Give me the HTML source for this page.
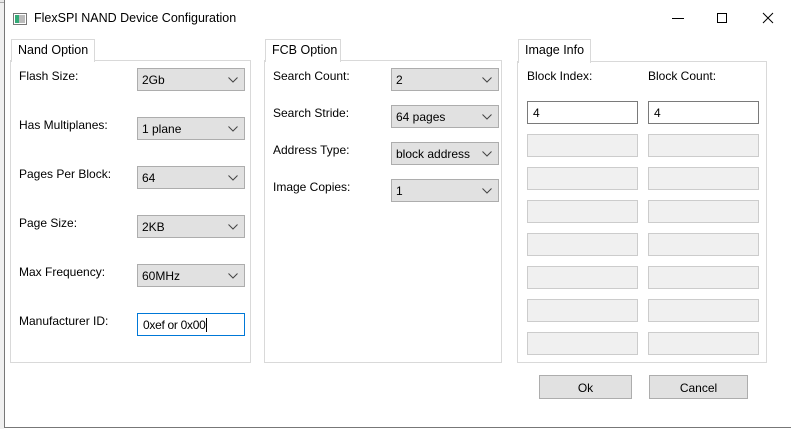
<!DOCTYPE html>
<html><head><meta charset="utf-8"><style>
*{box-sizing:border-box;margin:0;padding:0}
body{width:791px;height:429px;position:relative;overflow:hidden;background:#fff;font-family:"Liberation Sans",sans-serif;font-size:12px;color:#000}
.a{position:absolute}
.bgstrip{left:0;top:0;width:4px;height:429px;background:#f0f0f0}
.win{left:4px;top:0;width:787px;height:428px;border-left:1px solid #777;border-bottom:1px solid #777;background:#fff}
.topstrip{left:0;top:0;width:791px;height:3px;background:#e8e8e8;border-bottom:1px solid #aaa}
.panel{border:1px solid #d9d9d9;background:#fff}
.tab{border:1px solid #d9d9d9;border-bottom:none;background:#fff;padding:3px 0 0 6px;height:23px;font-size:12.5px}
.lbl{font-size:12px}
.cb{width:108px;height:23px;background:#e1e1e1;border:1px solid #adadad;padding:4px 0 0 4px;font-size:12px}
.cb svg{position:absolute;right:6px;top:8px}
.in{width:111px;height:23px;border:1px solid #7a7a7a;background:#fff;padding:4px 0 0 5px}
.dis{width:111px;height:23px;border:1px solid #ccc;background:#f0f0f0}
.btn{height:24px;background:#e1e1e1;border:1px solid #adadad;text-align:center;padding-top:5px}
</style></head><body>
<div class="a bgstrip"></div>
<div class="a topstrip"></div>
<div class="a win"></div>
<svg class="a" style="left:13px;top:13px" width="14" height="12"><rect x="0.5" y="0.5" width="13" height="11" fill="#fff" stroke="#777"/><rect x="2" y="2" width="4" height="8" fill="#3a7"/><rect x="6" y="2" width="6" height="8" fill="#bbb"/></svg>
<div class="a" style="left:34px;top:11px;font-size:12.5px">FlexSPI NAND Device Configuration</div>
<div class="a" style="left:672px;top:18px;width:12px;height:1px;background:#000"></div>
<div class="a" style="left:717px;top:13px;width:10px;height:10px;border:1px solid #000"></div>
<svg class="a" style="left:762px;top:12px" width="12" height="12"><path d="M1 1L11 11M11 1L1 11" stroke="#000" stroke-width="1"/></svg>

<div class="a panel" style="left:10px;top:60px;width:241px;height:303px"></div>
<div class="a tab" style="left:11px;top:39px;width:84px;height:23px">Nand Option</div>
<div class="a panel" style="left:264px;top:60px;width:238px;height:303px"></div>
<div class="a tab" style="left:265px;top:39px;width:76px;height:23px">FCB Option</div>
<div class="a panel" style="left:517px;top:61px;width:250px;height:302px"></div>
<div class="a tab" style="left:518px;top:39px;width:73px;height:24px">Image Info</div>

<div class="a lbl" style="left:19px;top:69px">Flash Size:</div>
<div class="a lbl" style="left:19px;top:118px">Has Multiplanes:</div>
<div class="a lbl" style="left:19px;top:167px">Pages Per Block:</div>
<div class="a lbl" style="left:19px;top:216px">Page Size:</div>
<div class="a lbl" style="left:19px;top:265px">Max Frequency:</div>
<div class="a lbl" style="left:19px;top:314px">Manufacturer ID:</div>
<div class="a cb" style="left:137px;top:68px">2Gb<svg width="10" height="6"><path d="M0.5 0.5L5 5L9.5 0.5" fill="none" stroke="#444"/></svg></div>
<div class="a cb" style="left:137px;top:117px">1 plane<svg width="10" height="6"><path d="M0.5 0.5L5 5L9.5 0.5" fill="none" stroke="#444"/></svg></div>
<div class="a cb" style="left:137px;top:166px">64<svg width="10" height="6"><path d="M0.5 0.5L5 5L9.5 0.5" fill="none" stroke="#444"/></svg></div>
<div class="a cb" style="left:137px;top:215px">2KB<svg width="10" height="6"><path d="M0.5 0.5L5 5L9.5 0.5" fill="none" stroke="#444"/></svg></div>
<div class="a cb" style="left:137px;top:264px">60MHz<svg width="10" height="6"><path d="M0.5 0.5L5 5L9.5 0.5" fill="none" stroke="#444"/></svg></div>
<div class="a" style="left:137px;top:313px;width:108px;height:23px;border:1px solid #0078d7;padding:4px 0 0 5px;letter-spacing:-0.3px">0xef or 0x00<span style="border-left:1px solid #000;margin-left:1px"></span></div>

<div class="a lbl" style="left:273px;top:69px">Search Count:</div>
<div class="a lbl" style="left:273px;top:106px">Search Stride:</div>
<div class="a lbl" style="left:273px;top:143px">Address Type:</div>
<div class="a lbl" style="left:273px;top:180px">Image Copies:</div>
<div class="a cb" style="left:391px;top:68px">2<svg width="10" height="6"><path d="M0.5 0.5L5 5L9.5 0.5" fill="none" stroke="#444"/></svg></div>
<div class="a cb" style="left:391px;top:105px">64 pages<svg width="10" height="6"><path d="M0.5 0.5L5 5L9.5 0.5" fill="none" stroke="#444"/></svg></div>
<div class="a cb" style="left:391px;top:142px">block address<svg width="10" height="6"><path d="M0.5 0.5L5 5L9.5 0.5" fill="none" stroke="#444"/></svg></div>
<div class="a cb" style="left:391px;top:179px">1<svg width="10" height="6"><path d="M0.5 0.5L5 5L9.5 0.5" fill="none" stroke="#444"/></svg></div>

<div class="a lbl" style="left:527px;top:69px">Block Index:</div>
<div class="a lbl" style="left:648px;top:69px">Block Count:</div>
<div class="a in" style="left:527px;top:101px">4</div>
<div class="a in" style="left:648px;top:101px">4</div>
<div class="a dis" style="left:527px;top:134px"></div><div class="a dis" style="left:648px;top:134px"></div>
<div class="a dis" style="left:527px;top:167px"></div><div class="a dis" style="left:648px;top:167px"></div>
<div class="a dis" style="left:527px;top:200px"></div><div class="a dis" style="left:648px;top:200px"></div>
<div class="a dis" style="left:527px;top:233px"></div><div class="a dis" style="left:648px;top:233px"></div>
<div class="a dis" style="left:527px;top:266px"></div><div class="a dis" style="left:648px;top:266px"></div>
<div class="a dis" style="left:527px;top:299px"></div><div class="a dis" style="left:648px;top:299px"></div>
<div class="a dis" style="left:527px;top:332px"></div><div class="a dis" style="left:648px;top:332px"></div>

<div class="a btn" style="left:539px;top:375px;width:93px">Ok</div>
<div class="a btn" style="left:649px;top:375px;width:99px">Cancel</div>
</body></html>
